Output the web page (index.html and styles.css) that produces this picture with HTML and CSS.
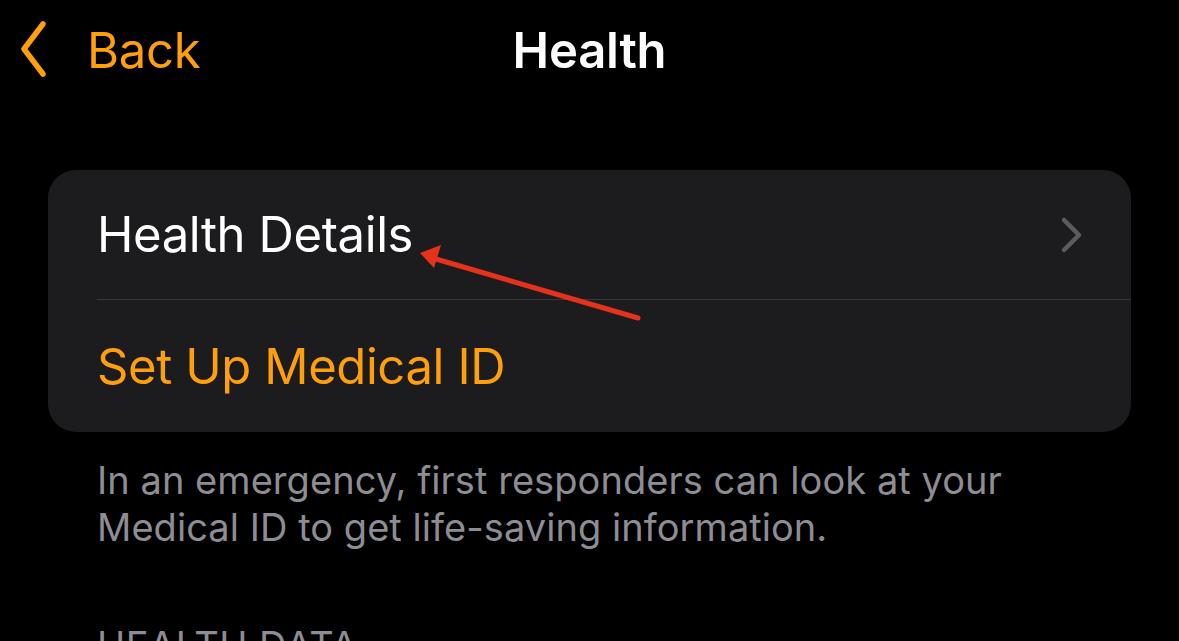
FILE: index.html
```html
<!DOCTYPE html>
<html lang="en">
<head>
<meta charset="utf-8">
<title>Health</title>
<link rel="stylesheet" href="styles.css">
</head>
<body>
<div class="screen">
  <header class="nav">
    <div class="nav-back">
      <svg class="back-chevron" width="30" height="58" viewBox="0 0 30 58" aria-hidden="true">
        <polyline points="22,3 3,28 22,53" fill="none" stroke="#ff9f0a" stroke-width="5.5" stroke-linecap="round" stroke-linejoin="round"/>
      </svg>
      <span class="back-label">Back</span>
    </div>
    <h1 class="nav-title">Health</h1>
    <div class="nav-spacer"></div>
  </header>

  <main class="content">
    <section class="card">
      <div class="row">
        <span class="row-label">Health Details</span>
        <svg class="row-chevron" width="24" height="38" viewBox="0 0 24 38" aria-hidden="true">
          <polyline points="4,4 19,19 4,34" fill="none" stroke="#5b5b60" stroke-width="4.5" stroke-linecap="round" stroke-linejoin="round"/>
        </svg>
      </div>
      <div class="row row-action">
        <span class="row-label orange">Set Up Medical ID</span>
      </div>
    </section>
    <p class="footnote">In an emergency, first responders can look at your Medical ID to get life-saving information.</p>
    <h2 class="section-header">HEALTH DATA</h2>
  </main>

  <svg class="annotation" width="1179" height="641" viewBox="0 0 1179 641" aria-hidden="true">
    <line x1="638" y1="318" x2="436" y2="259" stroke="#e5321c" stroke-width="5" stroke-linecap="round"/>
    <polygon points="420,253 441,245 434,268" fill="#e5321c"/>
  </svg>
</div>
</body>
</html>
```

FILE: styles.css
```css
* { box-sizing: border-box; }

html, body {
  margin: 0;
  padding: 0;
  background: #000;
}

body {
  font-family: Inter, "Noto Sans", "Liberation Sans", sans-serif;
  color: #fff;
  width: 1179px;
  height: 641px;
  overflow: hidden;
}

.screen {
  position: relative;
  width: 1179px;
  height: 641px;
  overflow: hidden;
}

.nav {
  display: grid;
  grid-template-columns: 1fr auto 1fr;
  align-items: center;
  height: 100px;
}

.nav-back {
  display: flex;
  align-items: center;
  gap: 36px;
  padding-left: 21px;
}

.back-chevron { display: block; }

.back-label {
  color: #ff9f0a;
  font-size: 49px;
  font-weight: 400;
  letter-spacing: -0.3px;
}

.nav-title {
  margin: 0;
  font-size: 49px;
  font-weight: 600;
  letter-spacing: -0.2px;
}

.content {
  padding: 70px 48px 0 48px;
}

.card {
  background: #1c1c1e;
  border-radius: 28px;
  overflow: hidden;
}

.row {
  display: flex;
  align-items: center;
  justify-content: space-between;
  height: 130px;
  margin-left: 49px;
  padding-right: 47px;
  border-bottom: 1.5px solid #38383a;
}

.row-action {
  height: 132px;
  border-bottom: none;
}

.row-label {
  font-size: 49px;
  font-weight: 400;
  letter-spacing: -0.4px;
}

.orange { color: #ff9f0a; }

.row-chevron { display: block; }

.footnote {
  margin: 25px 0 0 49px;
  color: #8d8d93;
  font-size: 38px;
  line-height: 47px;
  letter-spacing: 0.05px;
  max-width: 960px;
}

.section-header {
  margin: 71px 0 0 49px;
  color: #8d8d93;
  font-size: 38px;
  font-weight: 400;
  letter-spacing: 0.5px;
}

.annotation {
  position: absolute;
  left: 0;
  top: 0;
  pointer-events: none;
}
```
